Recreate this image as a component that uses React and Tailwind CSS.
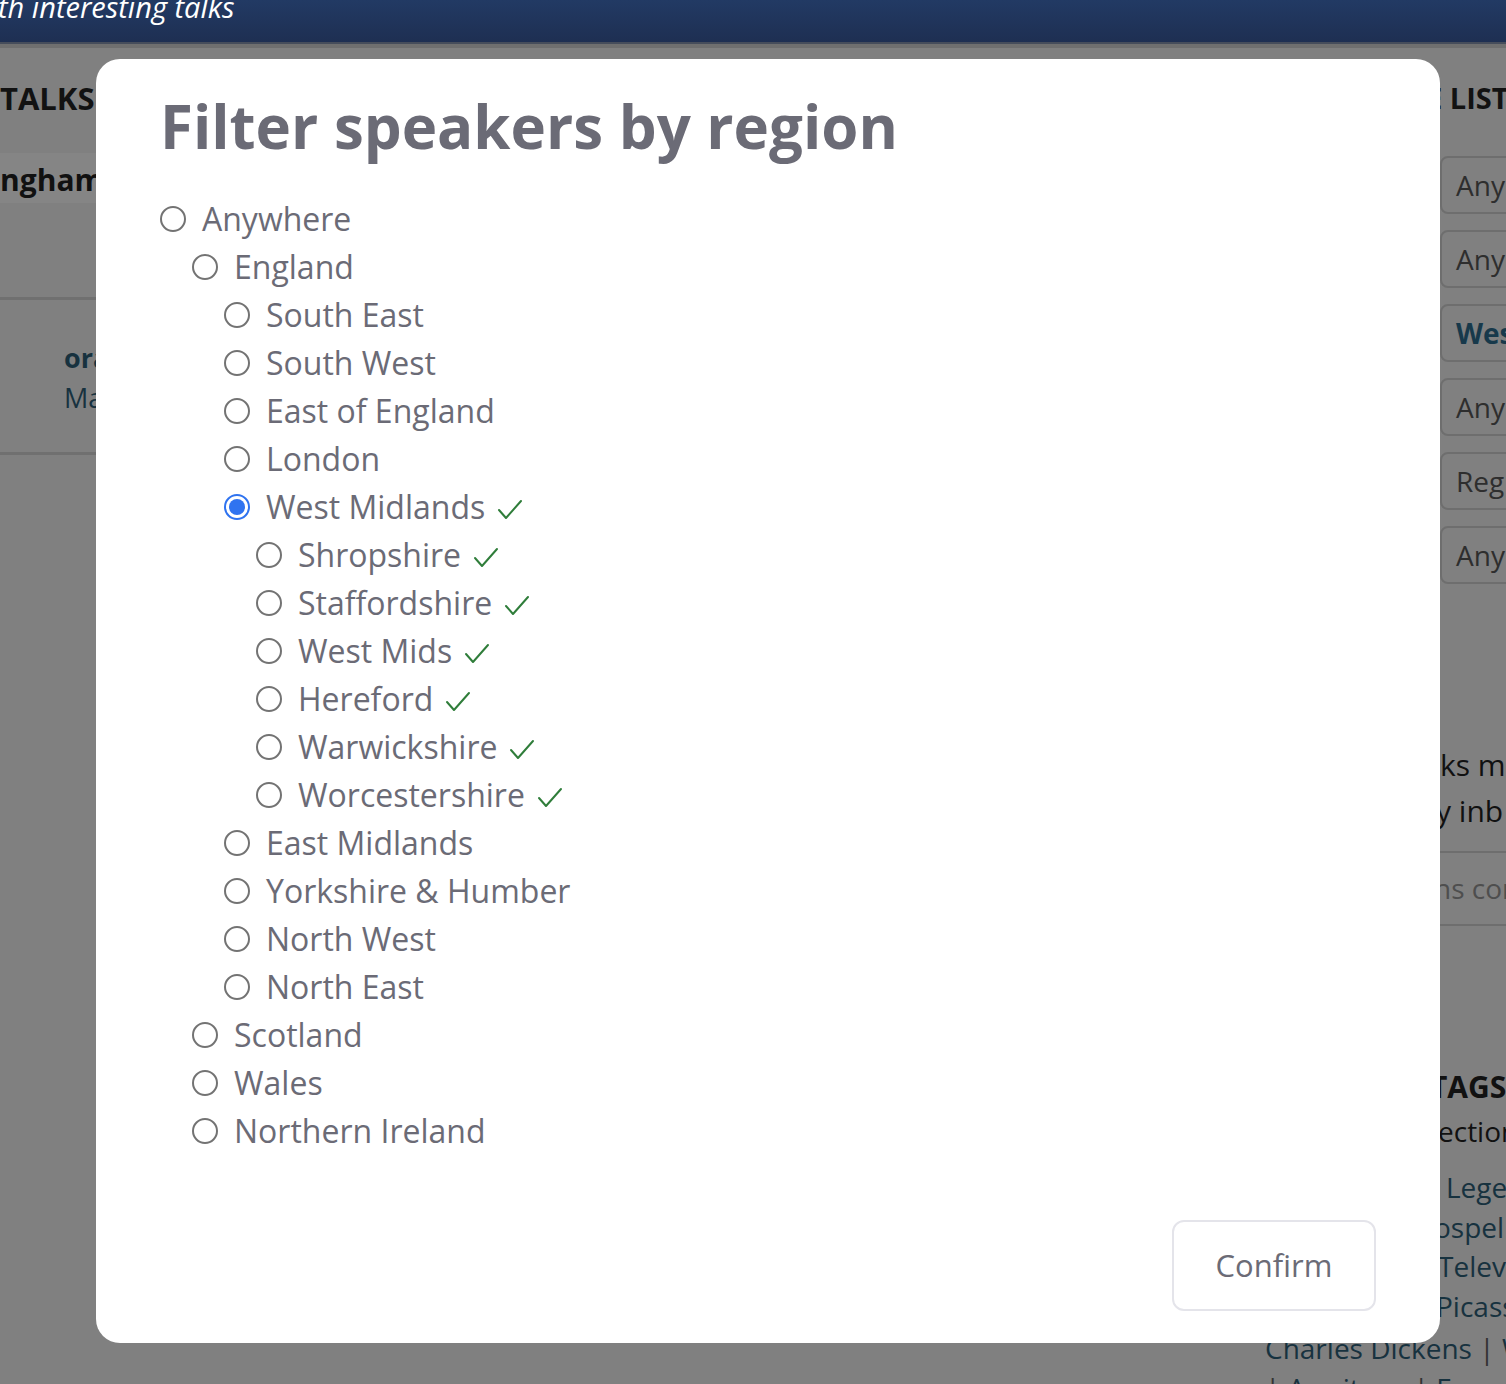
import React from "react";

const items = [
  { label: "Anywhere", level: 0 },
  { label: "England", level: 1 },
  { label: "South East", level: 2 },
  { label: "South West", level: 2 },
  { label: "East of England", level: 2 },
  { label: "London", level: 2 },
  { label: "West Midlands", level: 2, checked: true, tick: true },
  { label: "Shropshire", level: 3, tick: true },
  { label: "Staffordshire", level: 3, tick: true },
  { label: "West Mids", level: 3, tick: true },
  { label: "Hereford", level: 3, tick: true },
  { label: "Warwickshire", level: 3, tick: true },
  { label: "Worcestershire", level: 3, tick: true },
  { label: "East Midlands", level: 2 },
  { label: "Yorkshire & Humber", level: 2 },
  { label: "North West", level: 2 },
  { label: "North East", level: 2 },
  { label: "Scotland", level: 1 },
  { label: "Wales", level: 1 },
  { label: "Northern Ireland", level: 1 },
];

const indent = ["pl-0", "pl-[32px]", "pl-[64px]", "pl-[96px]"];

function Tick() {
  return (
    <svg width="26" height="24" viewBox="0 0 26 24" className="ml-[12px] mt-[6px]">
      <polyline points="2,12 9,20 24,3" fill="none" stroke="#2f7d3a" strokeWidth="2" strokeLinejoin="round" strokeLinecap="round" />
    </svg>
  );
}

function Radio({ checked }) {
  if (checked) {
    return (
      <span className="flex h-[26px] w-[26px] shrink-0 items-center justify-center rounded-full border-[2px] border-[#2f73f0]">
        <span className="h-[16px] w-[16px] rounded-full bg-[#2f73f0]" />
      </span>
    );
  }
  return <span className="h-[26px] w-[26px] shrink-0 rounded-full border-[2px] border-[#737373]" />;
}

export default function App() {
  return (
    <div
      className="relative h-[1384px] w-[1506px] overflow-hidden bg-[#808080]"
      style={{ fontFamily: '"Open Sans", "Noto Sans", sans-serif' }}
    >
      {/* header */}
      <div className="h-[44px] bg-gradient-to-b from-[#223a64] to-[#1e2f52] border-b-[2px] border-[#464d5b] overflow-hidden">
        <div className="-mt-[13px] -ml-[30px] whitespace-nowrap text-[29px] italic text-white leading-[40px]">
          with interesting talks
        </div>
      </div>
      <div className="h-[4px] bg-[#6f6f6f]" />

      {/* background page */}
      <div className="flex justify-between">
        {/* left column */}
        <div className="w-[96px] overflow-hidden">
          <div className="mt-[30px] whitespace-nowrap text-[31px] font-bold text-[#121212] leading-[40px]">
            TALKS
          </div>
          <div className="mt-[35px] h-[50px] bg-[#858585] overflow-hidden">
            <div className="mt-[4px] whitespace-nowrap text-[30px] font-bold text-[#111] leading-[46px]">
              ngham
            </div>
          </div>
          <div className="mt-[94px] border-t-[3px] border-[#707070]" />
          <div className="h-[152px] pt-[38px] pl-[64px] whitespace-nowrap">
            <div className="text-[27px] font-bold text-[#17323f] leading-[40px]">orators</div>
            <div className="text-[27px] text-[#17323f] leading-[40px]">Mary</div>
          </div>
          <div className="border-t-[3px] border-[#707070]" />
        </div>

        {/* right column */}
        <div className="w-[66px] overflow-hidden whitespace-nowrap">
          <div className="mt-[30px] -ml-[14px] text-[29px] font-bold text-[#121212] leading-[40px]">
            E LISTS
          </div>
          <div className="mt-[38px] flex flex-col gap-[16px]">
            {["Any", "Any", "Wes", "Any", "Reg", "Any"].map((t, i) => (
              <div
                key={i}
                className={
                  "h-[58px] w-[100px] rounded-[8px] border-[2px] border-[#6e6e6e] pl-[14px] text-[28px] leading-[54px] " +
                  (t === "Wes" ? "font-bold text-[#17394b]" : "text-[#2e2e2e]")
                }
              >
                {t}
              </div>
            ))}
          </div>
          <div className="mt-[158px] text-[30px] text-[#111] leading-[46px]">ks m</div>
          <div className="-ml-[4px] text-[30px] text-[#111] leading-[46px]">y inb</div>
          <div className="mt-[17px] border-t-[2px] border-[#6e6e6e]" />
          <div className="h-[71px] -ml-[6px] text-[28px] text-[#4e4e4e] leading-[71px]">ns cor</div>
          <div className="border-t-[2px] border-[#6e6e6e]" />
          <div className="mt-[139px] -ml-[10px] text-[30px] font-bold text-[#111] leading-[44px]">TAGS</div>
          <div className="-ml-[2px] text-[28px] text-[#111] leading-[44px]">ection</div>
          <div className="mt-[15px] text-[28px] text-[#17323f] leading-[39.5px]">
            <div className="pl-[6px]">Lege</div>
            <div className="-ml-[6px]">ospel</div>
            <div className="-ml-[2px]">Telev</div>
            <div className="-ml-[4px]">Picass</div>
          </div>
        </div>
      </div>

      {/* bottom links peeking under modal */}
      <div className="absolute left-[1265px] top-[1328px] whitespace-nowrap text-[28px] text-[#17323f] leading-[40px]">
        Charles Dickens <span className="text-[#333]">|</span> W
        <div className="text-[28px]"><span className="text-[#333]">|</span> Armitage <span className="text-[#333]">|</span> Farm</div>
      </div>

      {/* modal */}
      <div className="absolute left-[96px] top-[59px] flex h-[1284px] w-[1344px] flex-col rounded-[24px] bg-white px-[64px] pt-[22px] pb-[32px] text-[#6b6b76]">
        <h1 className="text-[60px] font-bold leading-[90px] text-[#6b6b76]">Filter speakers by region</h1>
        <div className="mt-[24px] flex flex-col">
          {items.map((it) => (
            <div key={it.label} className={"flex h-[48px] items-center " + indent[it.level]}>
              <Radio checked={it.checked} />
              <span className="ml-[16px] text-[32px] leading-[48px]">{it.label}</span>
              {it.tick && <Tick />}
            </div>
          ))}
        </div>
        <div className="mt-auto flex justify-end">
          <button className="h-[91px] w-[204px] rounded-[12px] border-[2px] border-[#e4e4ea] bg-white text-[31px] text-[#6b6b76]">
            Confirm
          </button>
        </div>
      </div>
    </div>
  );
}
